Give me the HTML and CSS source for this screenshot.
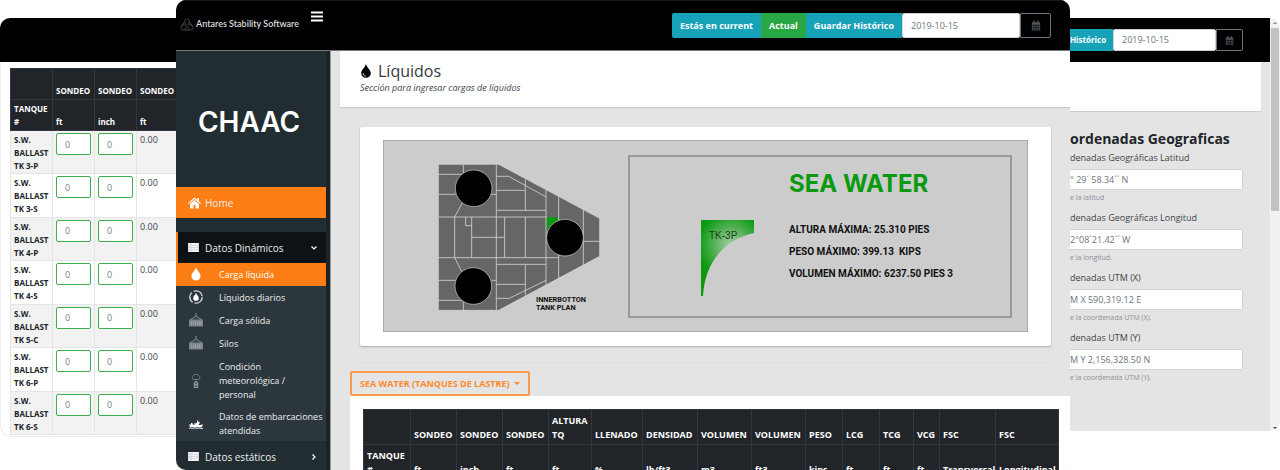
FILE: index.html
```
<!DOCTYPE html>
<html lang="es">
<head>
<meta charset="utf-8">
<title>Antares Stability Software</title>
<link rel="stylesheet" href="styles.css">
</head>
<body>
<svg class="defs" width="0" height="0" aria-hidden="true">
  <symbol id="drop" viewBox="0 0 12 16"><path d="M6 0C5 4 .5 7 .5 10.5a5.500 5.300 0 0 0 11 0C11.500 7 7 4 6 0z" fill="currentColor"/><path d="M2.600 10.500c.1 1.800 1.100 2.900 2.900 3.200" fill="none" stroke="var(--shine)" stroke-width="1.100"/></symbol>
  <symbol id="cal" viewBox="0 0 12 12"><path fill="currentColor" fill-rule="evenodd" d="M1 2h2V0h1.500v2h3V0H9v2h2v10H1zM2 5v1.600h1.600V5zm2.200 0v1.600h1.600V5zm2.200 0v1.600H8V5zm2.200 0v1.600H10V5zM2 7.400V9h1.600V7.400zm2.200 0V9h1.600V7.400zm2.200 0V9H8V7.400zm2.200 0V9H10V7.400zM2 9.800v1.400h1.600V9.800zm2.200 0v1.400h1.600V9.800zm2.200 0v1.400H8V9.800zm2.200 0v1.400H10V9.800z"/></symbol>
  <symbol id="list" viewBox="0 0 12 10"><path fill="#f4f4f4" d="M0 0h12v10H0z"/><path d="M3 0v10M0 2.500h12M0 5h12M0 7.500h12" stroke="#a5aaad" stroke-width=".4"/></symbol>
  <symbol id="crate" viewBox="0 0 14 14"><path d="M7 0v3" stroke="#8d9699" stroke-width="1"/><path d="M0 7 7 2.500 14 7v6.500H0z" fill="#7b8588"/><path d="M2.500 6.500 7 3.500l4.500 3z" fill="#39454a"/><path d="M2.500 8.500v3.500M4.500 8.500v3.500M6.500 8.500v3.500M8.500 8.500v3.500M10.500 8.500v3.500M12 8.500v3.500" stroke="#a3aaac" stroke-width=".8"/></symbol>
</svg>

<div class="stage">
  <section class="window side-left" aria-label="Tanques">
    <div class="bar"></div>
    <table class="grid tanks">
      <thead>
        <tr><th class="c-name"></th><th class="c-a">SONDEO</th><th class="c-b">SONDEO</th><th>SONDEO</th></tr>
        <tr><th>TANQUE #</th><th>ft</th><th>inch</th><th>ft</th></tr>
      </thead>
      <tbody>
        <tr><th>S.W. BALLAST TK 3-P</th><td><input aria-label="TK 3-P ft" value="0"></td><td><input aria-label="TK 3-P inch" value="0"></td><td>0.00</td></tr>
        <tr><th>S.W. BALLAST TK 3-S</th><td><input aria-label="TK 3-S ft" value="0"></td><td><input aria-label="TK 3-S inch" value="0"></td><td>0.00</td></tr>
        <tr><th>S.W. BALLAST TK 4-P</th><td><input aria-label="TK 4-P ft" value="0"></td><td><input aria-label="TK 4-P inch" value="0"></td><td>0.00</td></tr>
        <tr><th>S.W. BALLAST TK 4-S</th><td><input aria-label="TK 4-S ft" value="0"></td><td><input aria-label="TK 4-S inch" value="0"></td><td>0.00</td></tr>
        <tr><th>S.W. BALLAST TK 5-C</th><td><input aria-label="TK 5-C ft" value="0"></td><td><input aria-label="TK 5-C inch" value="0"></td><td>0.00</td></tr>
        <tr><th>S.W. BALLAST TK 6-P</th><td><input aria-label="TK 6-P ft" value="0"></td><td><input aria-label="TK 6-P inch" value="0"></td><td>0.00</td></tr>
        <tr><th>S.W. BALLAST TK 6-S</th><td><input aria-label="TK 6-S ft" value="0"></td><td><input aria-label="TK 6-S inch" value="0"></td><td>0.00</td></tr>
      </tbody>
    </table>
  </section>

  <section class="window front" aria-label="Líquidos">
    <header class="topbar">
      <div class="brand">
        <svg width="14" height="13" viewBox="0 0 28 26" fill="none" stroke="#596065" stroke-width="1.500"><path d="M14 2c5 0 6 6 2 11M14 2c-5 0-6 6-2 11M3 22c-3-5 2-9 9-8M3 22c3 4 8 2 10-5M25 22c3-5-2-9-9-8M25 22c-3 4-8 2-10-5"/><path d="M9 8 3 16M19 8l6 8M9 24h10"/></svg>
        <span>Antares Stability Software</span>
      </div>
      <button class="burger" aria-label="Menú"><svg width="12" height="11" viewBox="0 0 12 11"><path d="M0 1.500h12M0 5.500h12M0 9.500h12" stroke="#fff" stroke-width="2"/></svg></button>
      <div class="actions">
        <button class="btn info first">Estás en current</button><button class="btn ok">Actual</button><button class="btn info">Guardar Histórico</button><input class="date" aria-label="Fecha" value="2019-10-15"><button class="pick" aria-label="Calendario"><svg width="10" height="11"><use href="#cal"/></svg></button>
      </div>
    </header>
    <div class="body">
      <nav class="sidebar">
        <div class="logo">CHAAC</div>
        <a class="home" href="#"><svg width="13" height="12" viewBox="0 0 13 12"><path fill="#fff" d="M6.500.5 0 6.200l.8.900 5.700-5 5.700 5 .8-.9-2-1.800V1H9.300v1.900zM6.500 3 2 7v4.500h3.500V8h2v3.500H11V7z"/></svg>Home</a>
        <a class="group open" href="#"><svg width="11" height="9"><use href="#list"/></svg><span>Datos Dinámicos</span><svg width="6" height="6" viewBox="0 0 6 6"><path d="m.5 1.500 2.500 2.500 2.500-2.500" fill="none" stroke="#fff" stroke-width="1.200"/></svg></a>
        <ul class="items">
          <li class="on"><a href="#"><svg width="10" height="14"><use href="#drop"/></svg><span>Carga líquida</span></a></li>
          <li><a href="#"><svg width="14" height="14" viewBox="0 0 14 14"><circle cx="7" cy="7" r="6.200" fill="none" stroke="#d9dcdd" stroke-width="1.300" stroke-dasharray="11 2"/><path d="M7 2.800C6.500 5 4.200 6.300 4.200 8.200a2.800 2.600 0 0 0 5.600 0C9.800 6.300 7.500 5 7 2.800z" fill="#fff"/></svg><span>Líquidos diarios</span></a></li>
          <li><a href="#"><svg width="14" height="14"><use href="#crate"/></svg><span>Carga sólida</span></a></li>
          <li><a href="#"><svg width="14" height="14"><use href="#crate"/></svg><span>Silos</span></a></li>
          <li class="l3"><a href="#"><svg width="10" height="14" viewBox="0 0 10 14"><path d="M2.500 5.500a1.800 1.800 0 0 1-.2-3.400 2.800 2.300 0 0 1 5.400-.3A2 2 0 0 1 7.800 5.500z" fill="none" stroke="#7f898d" stroke-width=".8"/><path d="M5 6.500 7.200 8.500V14H2.800V8.500z" fill="#8c9598"/><circle cx="5" cy="9.200" r=".8" fill="#2b373d"/><path d="M4.200 11.500h1.600V13H4.200z" fill="#2b373d"/></svg><span>Condición meteorológica / personal</span></a></li>
          <li class="l2"><a href="#"><svg width="14" height="9" viewBox="0 0 14 9"><path fill="#fff" d="M0 4.500h2V3h1.500v1.500h1L5.500 5V3h1v1L8 2.500V.5h1V2l1.500-.5v2L9.500 5h2l2.500-.8L12.800 7.200H1.200z"/><path d="M0 8.300q1.200-.9 2.400 0t2.400 0 2.400 0 2.400 0 2.400 0 2 0" stroke="#fff" stroke-width=".9" fill="none"/></svg><span>Datos de embarcaciones atendidas</span></a></li>
        </ul>
        <a class="group" href="#"><svg width="11" height="9"><use href="#list"/></svg><span>Datos estáticos</span><svg width="6" height="6" viewBox="0 0 6 6"><path d="m1.500.5 2.500 2.500-2.500 2.500" fill="none" stroke="#fff" stroke-width="1.200"/></svg></a>
      </nav>
      <main class="content">
        <div class="heading">
          <h1><svg width="12" height="14"><use href="#drop"/></svg>Líquidos</h1>
          <p>Sección para ingresar cargas de líquidos</p>
        </div>
        <div class="card">
          <div class="plan">
            <svg class="deck" width="162" height="147" viewBox="236 132 486 441">
              <path d="M237 133H418L721 295V409L418 571H237z" fill="#666" stroke="#ddd" stroke-width="2"/>
              <path d="M562 292h36v12c-20 6-30 14-36 32z" fill="#0a9a10"/>
              <g fill="none" stroke="#d2d2d2" stroke-width="2.500">
                <path d="M237 163h75M312 133v38M237 223h52M397 223h13M411 133v438M237 291h325M308 250l-22 41v122l21 42M319 291v26h18M337 291v122M337 352h99M436 291v122M237 413h361M237 481h52M397 481h13M237 541h75M312 533v38M411 169h37l111 61M411 211h87M498 178v93M411 271h149M498 291v122M560 210v286M598 230v74M598 404v72M672 268v170M672 364h49M411 433h149M498 433v94M411 493h87M411 535h39l110-54"/>
              </g>
              <g stroke="#d2d2d2" stroke-width="2"><circle cx="343" cy="205" r="55"/><circle cx="342" cy="498" r="55"/><circle cx="617" cy="353" r="55"/></g>
              <g class="deck-label"><text x="530" y="545">INNERBOTTON</text><text x="530" y="570">TANK PLAN</text></g>
            </svg>
            <div class="sheet">
              <svg class="tank" width="53" height="76" viewBox="0 0 53 76">
                <defs><radialGradient id="g" gradientUnits="userSpaceOnUse" cx="30" cy="25" r="33"><stop offset="0" stop-color="#a8cfa8"/><stop offset=".35" stop-color="#70ba70"/><stop offset="1" stop-color="#0a9a10"/></radialGradient></defs>
                <path d="M0 0H53V13C23 20 4 42 2 76H0z" fill="url(#g)"/>
                <text class="tank-label" x="8" y="19">TK-3P</text>
              </svg>
              <div class="specs">
                <h2>SEA WATER</h2>
                <p>ALTURA MÁXIMA: 25.310 PIES</p>
                <p>PESO MÁXIMO: 399.13&nbsp; KIPS</p>
                <p>VOLUMEN MÁXIMO: 6237.50 PIES 3</p>
              </div>
            </div>
          </div>
        </div>
        <hr>
        <button class="drop">SEA WATER (TANQUES DE LASTRE)<span class="caret"></span></button>
        <div class="tray">
          <table class="grid loads">
            <colgroup><col class="w47"><col class="w46"><col class="w46"><col class="w46"><col class="w43"><col class="w51"><col class="w55"><col class="w54"><col class="w54"><col class="w37"><col class="w37"><col class="w34"><col class="w26"><col class="w56"><col class="w63"></colgroup>
            <tr><th></th><th>SONDEO</th><th>SONDEO</th><th>SONDEO</th><th>ALTURA TQ</th><th>LLENADO</th><th>DENSIDAD</th><th>VOLUMEN</th><th>VOLUMEN</th><th>PESO</th><th>LCG</th><th>TCG</th><th>VCG</th><th>FSC</th><th>FSC</th></tr>
            <tr><th>TANQUE #</th><th>ft</th><th>inch</th><th>ft</th><th>ft</th><th>%</th><th>lb/ft3</th><th>m3</th><th>ft3</th><th>kips</th><th>ft</th><th>ft</th><th>ft</th><th>Transversal</th><th>Longitudinal</th></tr>
          </table>
        </div>
      </main>
    </div>
  </section>

  <section class="window side-right" aria-label="Coordenadas">
    <div class="page">
      <div class="bar">
        <button class="btn info cut">Histórico</button><input class="date" aria-label="Fecha" value="2019-10-15"><button class="pick" aria-label="Calendario"><svg width="9" height="9" viewBox="0 0 12 12"><use href="#cal"/></svg></button>
      </div>
      <div class="blank"></div>
      <form class="coords">
        <h2>ordenadas Geograficas</h2>
        <div class="field"><label for="lat">denadas Geográficas Latitud</label><input id="lat" value="° 29´ 58.34´´ N"><small>e la latitud</small></div>
        <div class="field"><label for="lon">denadas Geográficas Longitud</label><input id="lon" value="2°08´21.42´´ W"><small>e la longitud.</small></div>
        <div class="field"><label for="ux">denadas UTM (X)</label><input id="ux" value="M X 590,319.12 E"><small>e la coordenada UTM (X).</small></div>
        <div class="field"><label for="uy">denadas UTM (Y)</label><input id="uy" value="M Y 2,156,328.50 N"><small>e la coordenada UTM (Y).</small></div>
      </form>
    </div>
    <div class="scroll"><i class="up"></i><i class="thumb"></i><i class="down"></i></div>
  </section>
</div>
</body>
</html>
```
FILE: styles.css
```
* { box-sizing: border-box; }
body { margin: 0; background: #fff; color: #3c4448; font: 9px/14px "Open Sans", "Noto Sans", sans-serif; }
h1, h2, p, ul { margin: 0; padding: 0; }
button, input { font: inherit; margin: 0; padding: 0; border: 0; border-radius: 0; }
button { cursor: pointer; }
a { color: inherit; text-decoration: none; }
svg { display: block; flex: none; --shine: #fff; }
.defs { position: absolute; }

.stage { display: flex; align-items: flex-start; height: 100vh; overflow: hidden; }
.window { overflow: hidden; }
.bar { height: 44px; background: #000; }

/* left window */
.side-left { width: 176px; height: 419px; margin-top: 18px; border-radius: 10px 0 0 10px; box-shadow: inset 1px -1px #f0f0f0; flex: none; }
.grid { border-collapse: collapse; table-layout: fixed; }
.grid th { text-align: left; font-weight: 700; }
.tanks { width: 167px; height: 367px; margin: 6px 0 0 10px; }
.tanks th, .tanks td { height: 43px; padding: 2px 0 0 3px; border: 1px solid #e3e5e6; line-height: 13px; vertical-align: top; }
.tanks th { font-size: 8px; }
.tanks tbody th { color: #212529; }
.tanks thead th { height: 31px; padding-bottom: 2px; vertical-align: bottom; background: #212529; border-color: #32383e; color: #fff; }
.tanks tbody tr:nth-child(odd) { background: #f2f2f2; }
.tanks .c-name, .tanks .c-a, .tanks .c-b { width: 42px; }
.tanks input { display: block; width: 35px; height: 22px; padding: 0 8px; border: 1px solid #3fae4e; border-radius: 2px; background: #fff; color: #7a8185; }

/* front window */
.front { display: flex; flex-direction: column; flex: 1; min-width: 0; height: 100%; border-radius: 10px; background: #e4e4e4; }
.topbar { display: flex; align-items: flex-start; flex: none; height: 51px; padding-right: 19px; background: #000; border-top: 1px solid #15191c; border-bottom: 1px solid #777; color: #fff; }
.brand { display: flex; align-items: center; gap: 2px; width: 135px; padding: 16px 0 0 4px; font: 600 9px/14px Lato, sans-serif; color: #ddd; white-space: nowrap; }
.burger { margin-top: 10px; background: none; }
.actions { display: flex; margin: 12px 0 0 auto; height: 25px; }
.btn { color: #fff; font-weight: 700; white-space: nowrap; }
.actions .btn { padding: 0 8px; }
.info { background: #17a2b8; }
.ok { background: #28a745; }
.first { border-radius: 2px 0 0 2px; }
.date { width: 118px; padding: 0 8px; background: #fff; border: 1px solid #ced4da; color: #6c757d; border-radius: 2px; }
.pick { display: grid; place-items: center; width: 31px; background: #000; border: 1px solid #6c757d; border-radius: 0 2px 2px 0; color: #4e565c; }
.body { display: flex; flex: 1; min-height: 0; }

.sidebar { width: 155px; flex: none; padding-right: 4px; background: #222d32; color: #eee; border-right: 1px solid #999; box-shadow: inset -4px 0 #1b2327; font-size: 10px; }
.logo { display: grid; place-items: center; height: 136px; padding: 6px 4px 0 0; font: 600 28px/36px Inter, sans-serif; color: #fff; }
.home { display: flex; align-items: center; gap: 4px; height: 31px; padding-left: 12px; background: #fd7e14; }
.group { display: flex; align-items: center; gap: 6px; height: 31px; padding: 0 9px 0 12px; }
.group span { flex: 1; }
.open { margin-top: 14px; background: #0d1214; border-left: 2px solid #fd7e14; padding-left: 10px; }
.items { list-style: none; background: #2b373d; font-size: 9px; }
.items a { display: grid; grid-template-columns: 15px 1fr; align-items: center; justify-items: center; gap: 16px; padding: 5px 0 4px 12px; }
.items svg { margin-top: -3px; }
.items span { justify-self: start; }
.items .on { background: #fd7e14; color: #fff; --shine: #fd7e14; }
.items .l2 a { padding-top: 4px; padding-bottom: 3px; }
.items .l2 svg, .items .l3 svg { margin-top: 0; }
.l3 span { padding-right: 24px; }

.content { flex: 1; min-width: 0; padding-left: 9px; }
.heading { height: 56px; padding: 10px 20px; background: #fff; box-shadow: 0 1px 1px #ccc; }
.heading h1 { display: flex; align-items: center; gap: 6px; font-size: 16px; font-weight: 400; line-height: 20px; color: #343a40; }
.heading svg { color: #000; }
.heading p { font-style: italic; line-height: 13px; }
.card { margin: 20px 19px 0 20px; padding: 13px 23px 14px; background: #fff; box-shadow: 0 1px 2px #aaa; border-radius: 2px; }
.plan { display: flex; height: 192px; padding: 14px 15px 13px 54px; background: #ccc; border: 1px solid #aaa; }
.deck { margin-top: 9px; }
.deck-label { font: 700 22px Roboto, sans-serif; fill: #111; }
.sheet { display: flex; gap: 35px; flex: 1; height: 163px; margin-left: 28px; padding: 15px 0 0 71px; border: 2px solid #999; }
.tank { margin-top: 48px; }
.tank-label { font: 10px "Liberation Sans", sans-serif; fill: #174017; }
.specs { color: #111; font: 700 10px/22px Roboto, sans-serif; white-space: nowrap; }
.specs h2 { margin-bottom: 23px; color: #0a9a10; font: 700 24px/24px Inter, sans-serif; }
hr { height: 1px; margin: 19px 20px 5px; border: 0; background: #eaeaea; }
.drop { display: flex; align-items: center; gap: 4px; height: 25px; margin-left: 10px; padding: 0 8px; border: 2px solid #fd9a4a; border-radius: 2px; background: transparent; color: #fd8a2c; font-weight: 700; }
.caret { border: 3px solid transparent; border-top-color: currentColor; border-bottom: 0; }
.tray { margin-left: 10px; padding: 13px 12px 0 13px; background: #fff; }
.loads { width: 100%; background: #212529; color: #fff; }
.loads th { height: 35px; padding: 3px 0 2px 3px; border: 1px solid #32383e; vertical-align: bottom; }
.w26 { width: 26px; } .w34 { width: 34px; } .w37 { width: 37px; } .w43 { width: 43px; } .w46 { width: 46px; }
.w47 { width: 47px; } .w51 { width: 51px; } .w54 { width: 54px; } .w55 { width: 55px; } .w56 { width: 56px; } .w63 { width: 63px; }

/* right window */
.side-right { display: flex; flex: none; width: 210px; height: 413px; margin-top: 18px; border-radius: 0 10px 10px 0; }
.page { flex: 1; min-width: 0; background: #e4e4e4; }
.page .bar { display: flex; padding: 11px 27px 11px 0; }
.cut { width: 43px; flex: none; font-size: 8px; text-align: left; }
.page .date { flex: 1; min-width: 0; }
.page .pick { width: 27px; flex: none; }
.blank { height: 49px; margin-right: 9px; background: #fff; box-shadow: 0 1px 1px #ccc; }
.coords { padding: 19px 27px 0 0; }
.coords h2 { font-size: 14px; line-height: 18px; font-weight: 700; color: #212529; margin-bottom: 3px; }
.field { display: grid; height: 60px; align-content: start; }
.field label { line-height: 13px; }
.field input { width: 100%; height: 21px; margin: 5px 0 3px; padding: 0; background: #fff; border: 1px solid #ced4da; border-left: 0; color: #6c757d; border-radius: 0 2px 2px 0; }
.field small { font-size: 7px; line-height: 10px; color: #8a9298; }
.scroll { display: flex; flex: none; flex-direction: column; align-items: center; width: 10px; padding: 4px 0 2px; background: #f1f1f1; }
.up { border: 2px solid transparent; border-bottom-color: #888; border-top: 0; }
.thumb { width: 8px; height: 183px; margin-top: 4px; background: #c1c1c1; }
.down { margin-top: auto; border: 2px solid transparent; border-top-color: #444; border-bottom: 0; }
```
